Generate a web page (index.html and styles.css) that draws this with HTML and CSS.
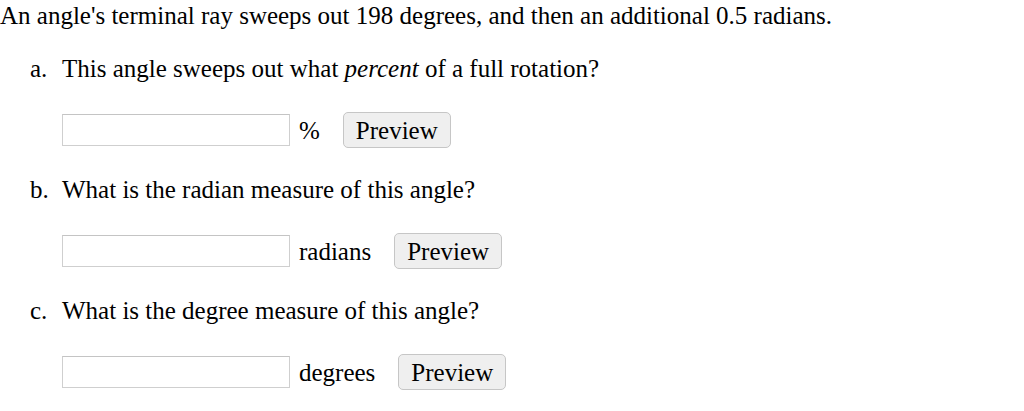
FILE: index.html
```html
<!DOCTYPE html>
<html>
<head>
<meta charset="utf-8">
<link rel="stylesheet" href="styles.css">
</head>
<body>
<p class="intro">An angle's terminal ray sweeps out 198 degrees, and then an additional 0.5 radians.</p>
<ol class="parts">
  <li class="part">
    <div class="question">This angle sweeps out what <i>percent</i> of a full rotation?</div>
    <div class="answer">
      <input class="field" type="text">
      <span class="unit">%</span>
      <button class="preview" type="button">Preview</button>
    </div>
  </li>
  <li class="part">
    <div class="question">What is the radian measure of this angle?</div>
    <div class="answer">
      <input class="field" type="text">
      <span class="unit">radians</span>
      <button class="preview" type="button">Preview</button>
    </div>
  </li>
  <li class="part">
    <div class="question">What is the degree measure of this angle?</div>
    <div class="answer">
      <input class="field" type="text">
      <span class="unit">degrees</span>
      <button class="preview" type="button">Preview</button>
    </div>
  </li>
</ol>
</body>
</html>
```

FILE: styles.css
```css
html, body {
  margin: 0;
  padding: 0;
  background: #ffffff;
}

body {
  font-family: "Liberation Serif", "Times New Roman", serif;
  font-size: 25px;
  line-height: 29px;
  color: #000000;
}

.intro {
  margin: 1px 0 0 0;
  white-space: nowrap;
}

.parts {
  list-style: none;
  counter-reset: part;
  margin: 24px 0 0 0;
  padding: 0 0 0 62px;
}

.part {
  counter-increment: part;
  padding-bottom: 27px;
}

.question::before {
  content: counter(part, lower-alpha) ".";
  display: inline-block;
  width: 32px;
  margin-left: -32px;
}

.answer {
  display: flex;
  align-items: center;
  margin-top: 29px;
  height: 36px;
}

.field {
  box-sizing: border-box;
  width: 228px;
  height: 32px;
  margin: 0;
  padding: 0 4px;
  border: 1px solid #cfcfcf;
  border-top-color: #c4c4c4;
  border-radius: 0;
  background: #ffffff;
  font-family: inherit;
  font-size: 16px;
}

.unit {
  margin-left: 9px;
  margin-right: 23px;
}

.preview {
  box-sizing: border-box;
  height: 36px;
  margin: 0;
  padding: 0 12px;
  border: 1px solid #c6c6c6;
  border-radius: 5px;
  background: #efefef;
  color: #000000;
  font-family: inherit;
  font-size: 25px;
  line-height: 29px;
}
```
